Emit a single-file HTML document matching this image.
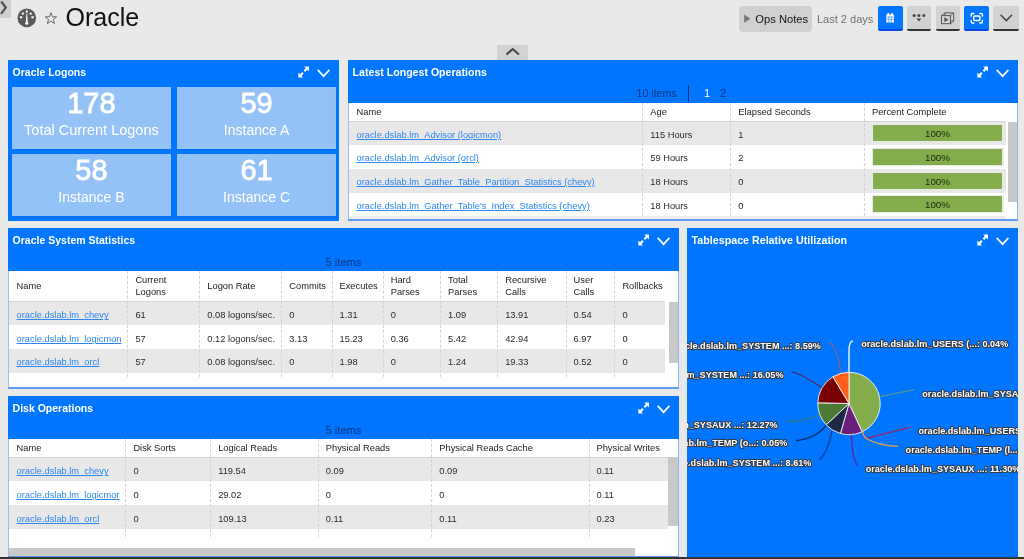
<!DOCTYPE html>
<html>
<head>
<meta charset="utf-8">
<title>Oracle</title>
<style>
*{box-sizing:border-box;margin:0;padding:0}
html,body{width:1024px;height:559px;overflow:hidden}
body{background:#e9e9e9;font-family:"Liberation Sans",sans-serif;color:#222;position:relative;font-size:11px}
#root{position:absolute;left:0;top:0;width:1024px;height:559px;will-change:transform}
.abs{position:absolute}
.w{position:absolute;background:#0075ff;overflow:hidden}
.wt{position:absolute;left:4.6px;top:5.7px;color:#fff;font-weight:bold;font-size:10.5px;line-height:12px;white-space:nowrap}
.tile{position:absolute;background:#94c2f7;color:#fff;text-align:center}
.tile .n{position:absolute;left:0;right:0;font-size:29px;line-height:28px;font-weight:normal;-webkit-text-stroke:0.8px #fff}
.tile .l{position:absolute;left:0;right:0;font-size:14px;line-height:16px}
.tb{position:absolute;background:#fff;overflow:hidden}
.row{position:absolute;left:0;background:#e8e8e8}
.c{position:absolute;white-space:nowrap;font-size:9.3px;line-height:12px;color:#2a2a2a}
.h{color:#222}
a.c{color:#2b86ee;text-decoration:underline}
.vl{position:absolute;width:0;border-left:1px dashed #d4d4d4}
.items{position:absolute;color:#10387c;font-size:11.1px;line-height:13px;white-space:nowrap}
.sb{position:absolute;background:#c9c9c9}
.bar{position:absolute;background:#82ad4a;height:16px;text-align:center;font-size:9.8px;line-height:16px;color:#1c2410}
.pl{font-family:"Liberation Sans",sans-serif;font-weight:bold;font-size:9.1px;fill:#fff;stroke:#333b48;stroke-width:2.1px;paint-order:stroke;stroke-linejoin:round}
</style>
</head>
<body>
<div id="root">
<!-- HEADER -->
<div class="abs" style="left:0;top:0;width:10.5px;height:18px;background:#d0d0d0;border-bottom-right-radius:1px"></div>
<svg class="abs" style="left:0;top:0" width="12" height="18" viewBox="0 0 12 18"><path d="M1.3 1.5 L5.8 7.6 L1.0 13.9" fill="none" stroke="#555" stroke-width="2.3"/></svg>
<svg class="abs" id="dashico" style="left:17px;top:8px" width="20" height="20" viewBox="0 0 20 20">
<circle cx="9.8" cy="9.9" r="9.3" fill="#5a5a5a"/>
<rect x="8.80" y="2.50" width="2" height="2.1" fill="#fff"/>
<rect x="2.80" y="8.30" width="2.4" height="1.9" fill="#fff"/>
<rect x="14.40" y="8.30" width="2.4" height="1.9" fill="#fff"/>
<rect x="4.90" y="4.60" width="2" height="2" fill="#fff" transform="rotate(-40 5.90 5.60)"/>
<rect x="12.70" y="4.60" width="2" height="2" fill="#fff" transform="rotate(40 13.70 5.60)"/>
<path d="M9.35 5.80 L10.25 5.80 L10.70 14.50 L8.90 14.50 Z" fill="#fff"/>
<circle cx="9.8" cy="15.30" r="1.5" fill="#fff"/>
</svg>
<svg class="abs" style="left:0;top:0" width="70" height="36" viewBox="0 0 70 36"><polygon points="50.90,12.70 52.37,16.68 56.61,16.85 53.28,19.47 54.43,23.55 50.90,21.20 47.37,23.55 48.52,19.47 45.19,16.85 49.43,16.68" fill="none" stroke="#666" stroke-width="1"/></svg>
<div class="abs" id="title" style="left:65.5px;top:1.1px;font-size:25px;line-height:32px;color:#111">Oracle</div>

<div class="abs" id="ops" style="left:739.2px;top:5.8px;width:72.8px;height:26px;background:#d0d0d0;border-radius:4px"></div>
<svg class="abs" style="left:743px;top:13px" width="10" height="12" viewBox="0 0 10 12"><path d="M1.2 1.6 L7.4 5.7 L1.2 9.8 Z" fill="#777"/></svg>
<div class="abs" style="left:755.3px;top:11.6px;font-size:11.2px;line-height:14px;color:#111;white-space:nowrap">Ops Notes</div>
<div class="abs" style="left:817px;top:11.6px;font-size:11px;line-height:14px;color:#707070;white-space:nowrap">Last 2 days</div>

<div class="abs" style="left:878px;top:5.5px;width:24.5px;height:25.5px;background:#0075ff;border-bottom:2.5px solid #0046e6;border-radius:2px"></div>
<div class="abs" style="left:906.5px;top:5.5px;width:24.5px;height:25.5px;background:#d2d2d2;border-bottom:2px solid #333;border-radius:2px"></div>
<div class="abs" style="left:935.7px;top:5.5px;width:24.5px;height:25.5px;background:#d2d2d2;border-bottom:2px solid #333;border-radius:2px"></div>
<div class="abs" style="left:964.3px;top:5.5px;width:24.5px;height:25.5px;background:#0075ff;border-bottom:2.5px solid #0046e6;border-radius:2px"></div>
<div class="abs" style="left:993.3px;top:5.5px;width:25.7px;height:25.5px;background:#d2d2d2;border-bottom:2px solid #333;border-radius:2px"></div>
<svg class="abs" style="left:870px;top:0" width="154" height="36" viewBox="870 0 154 36">
<!-- calendar -->
<g fill="#fff"><rect x="886.3" y="14.6" width="7.7" height="8" rx="0.6"/><rect x="887.4" y="13.1" width="1.7" height="2.4" rx="0.5"/><rect x="891.2" y="13.1" width="1.7" height="2.4" rx="0.5"/></g>
<g stroke="#0075ff" stroke-width="0.7" fill="none" opacity="0.75"><path d="M886.3 17.2 H894 M886.3 19.6 H894 M888.9 16 V22.6 M891.4 16 V22.6"/></g>
<!-- dots -->
<g fill="#444"><circle cx="914.1" cy="15.5" r="1.5"/><circle cx="918.9" cy="15.5" r="1.5"/><circle cx="923.8" cy="15.5" r="1.5"/><path d="M916.5 18.5 L921.3 18.5 L918.9 21.4 Z"/></g>
<!-- stacked play -->
<g fill="none" stroke="#555" stroke-width="1"><path d="M944.8 15.4 V12.9 H953.7 V21 H950.6"/><path d="M941.5 15.6 L944.8 12.9 M950.5 23.7 L953.7 21 M950.5 15.6 L953.7 12.9" stroke-width="0.8"/><rect x="941.5" y="15.6" width="9" height="8.1"/></g>
<path d="M944.3 17.3 L948.6 19.7 L944.3 22.1 Z" fill="#555"/>
<!-- fullscreen -->
<g fill="none" stroke="#fff" stroke-width="1.5" stroke-linecap="round" stroke-linejoin="round"><path d="M971.2 16 V14.6 Q971.2 13.5 972.4 13.5 H973.8"/><path d="M979.8 13.5 H981.2 Q982.4 13.5 982.4 14.6 V16"/><path d="M982.4 20.4 V21.8 Q982.4 22.9 981.2 22.9 H979.8"/><path d="M973.8 22.9 H972.4 Q971.2 22.9 971.2 21.8 V20.4"/><rect x="973.7" y="15.9" width="6.2" height="4.6" rx="1"/></g>
<!-- chevron -->
<path d="M1000.6 14.8 L1006.3 20.6 L1012 14.8" fill="none" stroke="#444" stroke-width="1.5"/>
</svg>

<div class="abs" id="coltab" style="left:497px;top:45px;width:31px;height:15px;background:#d2d2d2"></div>
<svg class="abs" style="left:497px;top:45px" width="31" height="15" viewBox="0 0 31 15"><path d="M9.5 9.5 L15.7 4 L22 9.5" fill="none" stroke="#444" stroke-width="2"/></svg>

<div class="w" id="w1" style="left:8px;top:60px;width:331px;height:160.6px">
<div class="wt">Oracle Logons</div><svg class="abs" style="left:290.4px;top:6px" width="11.3" height="12" viewBox="0 0 12 12" preserveAspectRatio="none"><g fill="#fff" stroke="none"><path d="M6.6 0.4 L11.6 0.4 L11.6 5.4 L9.9 3.7 L7.6 6 L6 4.4 L8.3 2.1 Z"/><path d="M0.4 11.6 L0.4 6.6 L2.1 8.3 L4.4 6 L6 7.6 L3.7 9.9 L5.4 11.6 Z"/></g></svg><svg class="abs" style="left:309.4px;top:8.5px" width="13.2" height="9" viewBox="0 0 14 9" preserveAspectRatio="none"><path d="M0.8 0.8 L7 7.2 L13.2 0.8" fill="none" stroke="#fff" stroke-width="1.7"/></svg>
<div class="tile" style="left:4px;top:27px;width:158.8px;height:62.3px"><div class="n" style="top:2px">178</div><div class="l" style="top:34.8px;font-size:14.5px">Total Current Logons</div></div><div class="tile" style="left:168.9px;top:27px;width:159.3px;height:62.3px"><div class="n" style="top:2px">59</div><div class="l" style="top:34.8px;font-size:14px">Instance A</div></div><div class="tile" style="left:4px;top:93.8px;width:158.8px;height:62.2px"><div class="n" style="top:2px">58</div><div class="l" style="top:34.8px;font-size:14px">Instance B</div></div><div class="tile" style="left:168.9px;top:93.8px;width:159.3px;height:62.2px"><div class="n" style="top:2px">61</div><div class="l" style="top:34.8px;font-size:14px">Instance C</div></div>
</div>

<div class="w" id="w2" style="left:348px;top:60px;width:670px;height:161px">
<div class="wt"><span style="font-size:10.6px">Latest Longest Operations</span></div><svg class="abs" style="left:629.4px;top:6px" width="11.3" height="12" viewBox="0 0 12 12" preserveAspectRatio="none"><g fill="#fff" stroke="none"><path d="M6.6 0.4 L11.6 0.4 L11.6 5.4 L9.9 3.7 L7.6 6 L6 4.4 L8.3 2.1 Z"/><path d="M0.4 11.6 L0.4 6.6 L2.1 8.3 L4.4 6 L6 7.6 L3.7 9.9 L5.4 11.6 Z"/></g></svg><svg class="abs" style="left:648.4px;top:8.5px" width="13.2" height="9" viewBox="0 0 14 9" preserveAspectRatio="none"><path d="M0.8 0.8 L7 7.2 L13.2 0.8" fill="none" stroke="#fff" stroke-width="1.7"/></svg>
<div class="items" style="left:288.6px;top:27.4px;font-size:10.6px">10 items</div><div class="abs" style="left:340px;top:25px;width:1px;height:17px;background:#0a3570"></div><div class="items" style="left:356px;top:27.4px;color:#fff">1</div><div class="items" style="left:372px;top:27.4px">2</div><div class="tb" style="left:1px;top:43px;width:668px;height:116px">
<div class="row" style="top:18px;width:657px;height:23.6px"></div>
<div class="row" style="top:66px;width:657px;height:23.6px"></div>
<div class="abs" style="left:0;top:18px;width:657px;height:1px;background:#d6d6d6"></div>
<div class="vl" style="left:293.3px;top:0;height:123.0px"></div>
<div class="vl" style="left:381.3px;top:0;height:123.0px"></div>
<div class="vl" style="left:515px;top:0;height:123.0px"></div>
<div class="c h" style="left:7.5px;top:3.08px">Name</div>
<div class="c h" style="left:301.3px;top:3.08px">Age</div>
<div class="c h" style="left:389.3px;top:3.08px">Elapsed Seconds</div>
<div class="c h" style="left:523px;top:3.08px">Percent Complete</div>
<a class="c" style="left:7.5px;top:26.28px">oracle.dslab.lm_Advisor (logicmon)</a>
<div class="c" style="left:301.3px;top:26.28px">115 Hours</div>
<div class="c" style="left:389.3px;top:26.28px">1</div>
<a class="c" style="left:7.5px;top:49.28px">oracle.dslab.lm_Advisor (orcl)</a>
<div class="c" style="left:301.3px;top:49.28px">59 Hours</div>
<div class="c" style="left:389.3px;top:49.28px">2</div>
<a class="c" style="left:7.5px;top:72.98px">oracle.dslab.lm_Gather_Table_Partition_Statistics (chevy)</a>
<div class="c" style="left:301.3px;top:72.98px">18 Hours</div>
<div class="c" style="left:389.3px;top:72.98px">0</div>
<a class="c" style="left:7.5px;top:96.88px">oracle.dslab.lm_Gather_Table's_Index_Statistics (chevy)</a>
<div class="c" style="left:301.3px;top:96.88px">18 Hours</div>
<div class="c" style="left:389.3px;top:96.88px">0</div>
<div class="abs" style="left:522.5px;top:20.5px;width:132.5px;height:18.6px;background:#e9e9e9"></div><div class="bar" style="left:524px;top:21.8px;width:129px"><span style="position:relative;top:1.2px">100%</span></div><div class="abs" style="left:522.5px;top:44.5px;width:132.5px;height:18.6px;background:#e9e9e9"></div><div class="bar" style="left:524px;top:45.8px;width:129px"><span style="position:relative;top:1.2px">100%</span></div><div class="abs" style="left:522.5px;top:68.5px;width:132.5px;height:18.6px;background:#e9e9e9"></div><div class="bar" style="left:524px;top:69.8px;width:129px"><span style="position:relative;top:1.2px">100%</span></div><div class="abs" style="left:522.5px;top:91.9px;width:132.5px;height:18.6px;background:#e9e9e9"></div><div class="bar" style="left:524px;top:93.2px;width:129px"><span style="position:relative;top:1.2px">100%</span></div><div class="sb" style="left:659px;top:18.5px;width:9.5px;height:80.3px"></div><div class="abs" style="left:0;top:113px;width:657px;height:4px;background:#ebebeb"></div>
</div><div class="abs" style="left:0;top:43px;width:1px;height:118px;background:#9bbcf6"></div><div class="abs" style="right:0;top:43px;width:1px;height:118px;background:#8ab2f8"></div><div class="abs" style="left:0;bottom:0;width:670px;height:2px;background:#5f9af6"></div>
</div>

<div class="w" id="w3" style="left:8px;top:228px;width:671px;height:161px">
<div class="wt">Oracle System Statistics</div><svg class="abs" style="left:630.4px;top:6px" width="11.3" height="12" viewBox="0 0 12 12" preserveAspectRatio="none"><g fill="#fff" stroke="none"><path d="M6.6 0.4 L11.6 0.4 L11.6 5.4 L9.9 3.7 L7.6 6 L6 4.4 L8.3 2.1 Z"/><path d="M0.4 11.6 L0.4 6.6 L2.1 8.3 L4.4 6 L6 7.6 L3.7 9.9 L5.4 11.6 Z"/></g></svg><svg class="abs" style="left:649.4px;top:8.5px" width="13.2" height="9" viewBox="0 0 14 9" preserveAspectRatio="none"><path d="M0.8 0.8 L7 7.2 L13.2 0.8" fill="none" stroke="#fff" stroke-width="1.7"/></svg>
<div class="items" style="left:317.6px;top:27.9px">5 items</div><div class="tb" style="left:1px;top:43px;width:669px;height:116px">
<div class="row" style="top:30px;width:655.7px;height:23.9px"></div>
<div class="row" style="top:77.7px;width:655.7px;height:23.9px"></div>
<div class="abs" style="left:0;top:30px;width:655.7px;height:1px;background:#d6d6d6"></div>
<div class="vl" style="left:118.4px;top:0;height:106.1px"></div>
<div class="vl" style="left:190.3px;top:0;height:106.1px"></div>
<div class="vl" style="left:272.3px;top:0;height:106.1px"></div>
<div class="vl" style="left:322.5px;top:0;height:106.1px"></div>
<div class="vl" style="left:373.7px;top:0;height:106.1px"></div>
<div class="vl" style="left:431.1px;top:0;height:106.1px"></div>
<div class="vl" style="left:488.2px;top:0;height:106.1px"></div>
<div class="vl" style="left:556.6px;top:0;height:106.1px"></div>
<div class="vl" style="left:605.4px;top:0;height:106.1px"></div>
<div class="c h" style="left:7.6px;top:8.88px">Name</div>
<div class="c h" style="left:126.4px;top:3.98px;line-height:11.8px">Current<br>Logons</div>
<div class="c h" style="left:198.3px;top:8.88px">Logon Rate</div>
<div class="c h" style="left:280.3px;top:8.88px">Commits</div>
<div class="c h" style="left:330.5px;top:8.88px">Executes</div>
<div class="c h" style="left:381.7px;top:3.98px;line-height:11.8px">Hard<br>Parses</div>
<div class="c h" style="left:439.1px;top:3.98px;line-height:11.8px">Total<br>Parses</div>
<div class="c h" style="left:496.2px;top:3.98px;line-height:11.8px">Recursive<br>Calls</div>
<div class="c h" style="left:564.6px;top:3.98px;line-height:11.8px">User<br>Calls</div>
<div class="c h" style="left:613.4px;top:8.88px">Rollbacks</div>
<a class="c" style="left:7.6px;top:38.28px">oracle.dslab.lm_chevy</a>
<div class="c" style="left:126.4px;top:38.28px">61</div>
<div class="c" style="left:198.3px;top:38.28px">0.08 logons/sec.</div>
<div class="c" style="left:280.3px;top:38.28px">0</div>
<div class="c" style="left:330.5px;top:38.28px">1.31</div>
<div class="c" style="left:381.7px;top:38.28px">0</div>
<div class="c" style="left:439.1px;top:38.28px">1.09</div>
<div class="c" style="left:496.2px;top:38.28px">13.91</div>
<div class="c" style="left:564.6px;top:38.28px">0.54</div>
<div class="c" style="left:613.4px;top:38.28px">0</div>
<a class="c" style="left:7.6px;top:62.08px">oracle.dslab.lm_logicmon</a>
<div class="c" style="left:126.4px;top:62.08px">57</div>
<div class="c" style="left:198.3px;top:62.08px">0.12 logons/sec.</div>
<div class="c" style="left:280.3px;top:62.08px">3.13</div>
<div class="c" style="left:330.5px;top:62.08px">15.23</div>
<div class="c" style="left:381.7px;top:62.08px">0.36</div>
<div class="c" style="left:439.1px;top:62.08px">5.42</div>
<div class="c" style="left:496.2px;top:62.08px">42.94</div>
<div class="c" style="left:564.6px;top:62.08px">6.97</div>
<div class="c" style="left:613.4px;top:62.08px">0</div>
<a class="c" style="left:7.6px;top:85.28px">oracle.dslab.lm_orcl</a>
<div class="c" style="left:126.4px;top:85.28px">57</div>
<div class="c" style="left:198.3px;top:85.28px">0.08 logons/sec.</div>
<div class="c" style="left:280.3px;top:85.28px">0</div>
<div class="c" style="left:330.5px;top:85.28px">1.98</div>
<div class="c" style="left:381.7px;top:85.28px">0</div>
<div class="c" style="left:439.1px;top:85.28px">1.24</div>
<div class="c" style="left:496.2px;top:85.28px">19.33</div>
<div class="c" style="left:564.6px;top:85.28px">0.52</div>
<div class="c" style="left:613.4px;top:85.28px">0</div>
<div class="sb" style="left:659.8px;top:31px;width:9.2px;height:61.4px"></div>
</div><div class="abs" style="left:0;top:43px;width:1px;height:118px;background:#9bbcf6"></div><div class="abs" style="right:0;top:43px;width:1px;height:118px;background:#8ab2f8"></div><div class="abs" style="left:0;bottom:0;width:671px;height:2px;background:#5f9af6"></div>
</div>

<div class="w" id="w4" style="left:8px;top:396px;width:671px;height:161px">
<div class="wt">Disk Operations</div><svg class="abs" style="left:630.4px;top:6px" width="11.3" height="12" viewBox="0 0 12 12" preserveAspectRatio="none"><g fill="#fff" stroke="none"><path d="M6.6 0.4 L11.6 0.4 L11.6 5.4 L9.9 3.7 L7.6 6 L6 4.4 L8.3 2.1 Z"/><path d="M0.4 11.6 L0.4 6.6 L2.1 8.3 L4.4 6 L6 7.6 L3.7 9.9 L5.4 11.6 Z"/></g></svg><svg class="abs" style="left:649.4px;top:8.5px" width="13.2" height="9" viewBox="0 0 14 9" preserveAspectRatio="none"><path d="M0.8 0.8 L7 7.2 L13.2 0.8" fill="none" stroke="#fff" stroke-width="1.7"/></svg>
<div class="items" style="left:317.6px;top:27.9px">5 items</div><div class="tb" style="left:1px;top:43px;width:669px;height:116.5px">
<div class="row" style="top:18px;width:659px;height:24px"></div>
<div class="row" style="top:66px;width:659px;height:24px"></div>
<div class="abs" style="left:0;top:18px;width:659px;height:1px;background:#d6d6d6"></div>
<div class="vl" style="left:116.4px;top:0;height:98px"></div>
<div class="vl" style="left:201.2px;top:0;height:98px"></div>
<div class="vl" style="left:308.8px;top:0;height:98px"></div>
<div class="vl" style="left:422.3px;top:0;height:98px"></div>
<div class="vl" style="left:579.5px;top:0;height:98px"></div>
<div class="c h" style="left:7.6px;top:3.28px">Name</div>
<div class="c h" style="left:124.4px;top:3.28px">Disk Sorts</div>
<div class="c h" style="left:209.2px;top:3.28px">Logical Reads</div>
<div class="c h" style="left:316.8px;top:3.28px">Physical Reads</div>
<div class="c h" style="left:430.3px;top:3.28px">Physical Reads Cache</div>
<div class="c h" style="left:587.5px;top:3.28px">Physical Writes</div>
<a class="c" style="left:7.6px;top:26.28px">oracle.dslab.lm_chevy</a>
<div class="c" style="left:124.4px;top:26.28px">0</div>
<div class="c" style="left:209.2px;top:26.28px">119.54</div>
<div class="c" style="left:316.8px;top:26.28px">0.09</div>
<div class="c" style="left:430.3px;top:26.28px">0.09</div>
<div class="c" style="left:587.5px;top:26.28px">0.11</div>
<a class="c" style="left:7.6px;top:50.28px">oracle.dslab.lm_logicmor</a>
<div class="c" style="left:124.4px;top:50.28px">0</div>
<div class="c" style="left:209.2px;top:50.28px">29.02</div>
<div class="c" style="left:316.8px;top:50.28px">0</div>
<div class="c" style="left:430.3px;top:50.28px">0</div>
<div class="c" style="left:587.5px;top:50.28px">0.11</div>
<a class="c" style="left:7.6px;top:73.58px">oracle.dslab.lm_orcl</a>
<div class="c" style="left:124.4px;top:73.58px">0</div>
<div class="c" style="left:209.2px;top:73.58px">109.13</div>
<div class="c" style="left:316.8px;top:73.58px">0.11</div>
<div class="c" style="left:430.3px;top:73.58px">0.11</div>
<div class="c" style="left:587.5px;top:73.58px">0.23</div>
<div class="sb" style="left:659.2px;top:18.3px;width:9.8px;height:69.2px"></div><div class="sb" style="left:0px;top:109.3px;width:625.7px;height:7.3px"></div>
</div><div class="abs" style="left:0;top:43px;width:1px;height:118px;background:#9bbcf6"></div><div class="abs" style="right:0;top:43px;width:1px;height:118px;background:#8ab2f8"></div><div class="abs" style="left:0;bottom:0;width:671px;height:1.5px;background:#5f9af6"></div>
</div>

<div class="w" id="w5" style="left:687px;top:228px;width:331px;height:329px">
<div class="wt"><span style="font-size:10.7px">Tablespace Relative Utilization</span></div><svg class="abs" style="left:290.4px;top:6px" width="11.3" height="12" viewBox="0 0 12 12" preserveAspectRatio="none"><g fill="#fff" stroke="none"><path d="M6.6 0.4 L11.6 0.4 L11.6 5.4 L9.9 3.7 L7.6 6 L6 4.4 L8.3 2.1 Z"/><path d="M0.4 11.6 L0.4 6.6 L2.1 8.3 L4.4 6 L6 7.6 L3.7 9.9 L5.4 11.6 Z"/></g></svg><svg class="abs" style="left:309.4px;top:8.5px" width="13.2" height="9" viewBox="0 0 14 9" preserveAspectRatio="none"><path d="M0.8 0.8 L7 7.2 L13.2 0.8" fill="none" stroke="#fff" stroke-width="1.7"/></svg>
<svg class="abs" style="left:0;top:0" width="331" height="329" viewBox="0 0 331 329">
<path d="M142.2 115.0 Q149.5 117.0 153.9 144.4" fill="none" stroke="#8a6288" stroke-width="1.3"/>
<path d="M104.8 143.9 Q113.0 145.2 134.7 159.6" fill="none" stroke="#45307a" stroke-width="1.3"/>
<path d="M99.3 193.6 Q119.0 193.0 132.6 186.6" fill="none" stroke="#2a7f8c" stroke-width="1.3"/>
<path d="M109.0 212.7 Q131.0 209.5 139.4 196.6" fill="none" stroke="#0a2f66" stroke-width="1.3"/>
<path d="M132.6 231.5 Q140.5 225.0 145.0 202.8" fill="none" stroke="#123f86" stroke-width="1.3"/>
<path d="M162.0 144.2 L162.0 123.0 Q162.0 113.2 166.0 112.8" fill="none" stroke="#ffffff" stroke-width="1.3"/>
<path d="M193.4 168.5 L227.0 161.7" fill="none" stroke="#4a96a0" stroke-width="1.3"/>
<path d="M223.5 199.2 L179.2 210.5 Q177.0 209.0 175.2 203.3" fill="none" stroke="#8a2a78" stroke-width="1.3"/>
<path d="M211.1 218.4 Q191.0 217.5 179.2 210.5 Q177.0 209.0 175.2 203.3" fill="none" stroke="#e0a04a" stroke-width="1.3"/>
<path d="M164.4 206.8 Q165.0 230.0 170.6 237.8" fill="none" stroke="#5a2aa0" stroke-width="1.3"/>
<path d="M162.00 175.50 L162.08 144.30 A31.2 31.2 0 0 1 175.21 203.76 Z" fill="#82ad4a" stroke="#f4f4f4" stroke-width="0.9" stroke-linejoin="round"/>
<path d="M162.00 175.50 L175.05 203.84 A31.2 31.2 0 0 1 153.43 205.50 Z" fill="#6a1f7a" stroke="#f4f4f4" stroke-width="0.9" stroke-linejoin="round"/>
<path d="M162.00 175.50 L153.43 205.50 A31.2 31.2 0 0 1 139.20 196.80 Z" fill="#1c2a44" stroke="#f4f4f4" stroke-width="0.9" stroke-linejoin="round"/>
<path d="M162.00 175.50 L139.14 196.73 A31.2 31.2 0 0 1 130.81 174.79 Z" fill="#4a7a34" stroke="#f4f4f4" stroke-width="0.9" stroke-linejoin="round"/>
<path d="M162.00 175.50 L130.81 174.79 A31.2 31.2 0 0 1 145.97 148.74 Z" fill="#7a0000" stroke="#f4f4f4" stroke-width="0.9" stroke-linejoin="round"/>
<path d="M162.00 175.50 L145.97 148.74 A31.2 31.2 0 0 1 162.00 144.30 Z" fill="#ff5f1f" stroke="#f4f4f4" stroke-width="0.9" stroke-linejoin="round"/>
<text class="pl" text-anchor="end" x="133.9" y="121.1">oracle.dslab.lm_SYSTEM ...: 8.59%</text>
<text class="pl" text-anchor="end" x="96.5" y="149.9">oracle.dslab.lm_SYSTEM ...: 16.05%</text>
<text class="pl" text-anchor="end" x="90.7" y="199.8">oracle.dslab.lm_SYSAUX ...: 12.27%</text>
<text class="pl" text-anchor="end" x="100.3" y="218.1">oracle.dslab.lm_TEMP (o...: 0.05%</text>
<text class="pl" text-anchor="end" x="124.4" y="237.7">oracle.dslab.lm_SYSTEM ...: 8.61%</text>
<text class="pl" text-anchor="start" x="174.2" y="119.4">oracle.dslab.lm_USERS (...: 0.04%</text>
<text class="pl" text-anchor="start" x="235.3" y="168.5">oracle.dslab.lm_SYSAUX ...: 42.99%</text>
<text class="pl" text-anchor="start" x="231.5" y="205.6">oracle.dslab.lm_USERS (...: 0.05%</text>
<text class="pl" text-anchor="start" x="218.6" y="224.7">oracle.dslab.lm_TEMP (l...: 0.05%</text>
<text class="pl" text-anchor="start" x="178.7" y="243.5">oracle.dslab.lm_SYSAUX ...: 11.30%</text>
</svg>
</div>


<div class="abs" id="bottombar" style="left:0;top:557px;width:1024px;height:2px;background:#333"></div>
</div>
</body>
</html>
